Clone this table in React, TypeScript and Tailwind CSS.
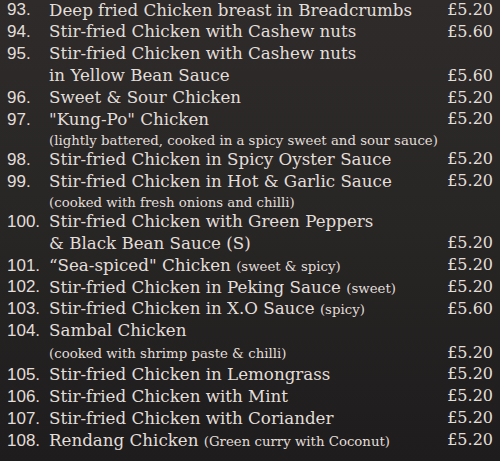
type Line = {
  num?: string;
  text: string;
  note?: string;
  price?: string;
  sub?: boolean;
};

const lines: Line[] = [
  { num: "93.", text: "Deep fried Chicken breast in Breadcrumbs", price: "£5.20" },
  { num: "94.", text: "Stir-fried Chicken with Cashew nuts", price: "£5.60" },
  { num: "95.", text: "Stir-fried Chicken with Cashew nuts" },
  { text: "in Yellow Bean Sauce", price: "£5.60" },
  { num: "96.", text: "Sweet & Sour Chicken", price: "£5.20" },
  { num: "97.", text: "\"Kung-Po\" Chicken", price: "£5.20" },
  { text: "", note: "(lightly battered, cooked in a spicy sweet and sour sauce)", sub: true },
  { num: "98.", text: "Stir-fried Chicken in Spicy Oyster Sauce", price: "£5.20" },
  { num: "99.", text: "Stir-fried Chicken in Hot & Garlic Sauce", price: "£5.20" },
  { text: "", note: "(cooked with fresh onions and chilli)", sub: true },
  { num: "100.", text: "Stir-fried Chicken with Green Peppers" },
  { text: "& Black Bean Sauce (S)", price: "£5.20" },
  { num: "101.", text: "“Sea-spiced\" Chicken ", note: "(sweet & spicy)", price: "£5.20" },
  { num: "102.", text: "Stir-fried Chicken in Peking Sauce ", note: "(sweet)", price: "£5.20" },
  { num: "103.", text: "Stir-fried Chicken in X.O Sauce ", note: "(spicy)", price: "£5.60" },
  { num: "104.", text: "Sambal Chicken" },
  { text: "", note: "(cooked with shrimp paste & chilli)", price: "£5.20" },
  { num: "105.", text: "Stir-fried Chicken in Lemongrass", price: "£5.20" },
  { num: "106.", text: "Stir-fried Chicken with Mint", price: "£5.20" },
  { num: "107.", text: "Stir-fried Chicken with Coriander", price: "£5.20" },
  { num: "108.", text: "Rendang Chicken ", note: "(Green curry with Coconut)", price: "£5.20" },
];

const serif = "font-['DejaVu_Serif','Liberation_Serif',serif]";

export default function App() {
  return (
    <div className="w-[500px] h-[461px] overflow-hidden bg-gradient-to-b from-[#2e2b2a] via-[#282525] to-[#1e1c1c] text-[#e2ded9]">
      <div className="-mt-px">
        {lines.map((l, i) => (
          <div
            key={i}
            className={`flex items-center ${l.sub ? "h-[18.1px]" : "h-[21.9px]"}`}
          >
            <div className="w-[49px] shrink-0 pl-[7px] font-['Liberation_Sans',Arial,sans-serif] text-[17px] leading-none">
              {l.num}
            </div>
            <div className={`flex-1 whitespace-nowrap ${serif} text-[16.7px] leading-none`}>
              {l.text}
              {l.note && <span className="text-[13.3px]">{l.note}</span>}
            </div>
            <div className={`w-[60px] shrink-0 pr-[7px] text-right ${serif} text-[16px] leading-none`}>
              {l.price}
            </div>
          </div>
        ))}
      </div>
    </div>
  );
}
